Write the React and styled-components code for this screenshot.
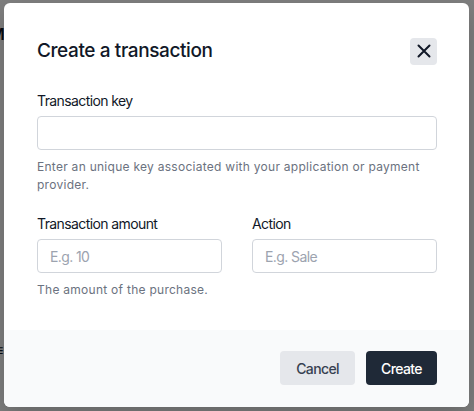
import React from "react";
import styled, { createGlobalStyle } from "styled-components";

const Global = createGlobalStyle`
  html, body { margin: 0; padding: 0; }
  body { font-family: Inter, "Noto Sans", Arial, sans-serif; -webkit-font-smoothing: antialiased; }
  * { box-sizing: border-box; }
`;

const Page = styled.div`
  position: relative;
  width: 474px;
  height: 411px;
  overflow: hidden;
  background: #ffffff;
`;

const BehindText = styled.span`
  position: absolute;
  left: ${(p) => p.$x}px;
  top: ${(p) => p.$y}px;
  font-size: 16px;
  font-weight: 600;
  color: #111827;
`;

const Overlay = styled.div`
  position: absolute;
  inset: 0;
  background: rgba(0, 0, 0, 0.5);
  display: flex;
  align-items: flex-start;
  padding: 3px 0 0 4px;
`;

const Dialog = styled.div`
  width: 465px;
  background: #ffffff;
  border-radius: 6px;
  overflow: hidden;
  box-shadow: 0 10px 25px rgba(0, 0, 0, 0.2);
  display: flex;
  flex-direction: column;
`;

const Body = styled.div`
  padding: 34px 32px 31px 33px;
  display: flex;
  flex-direction: column;
`;

const Header = styled.div`
  display: flex;
  align-items: center;
  justify-content: space-between;
  height: 28px;
  margin-bottom: 26px;
`;

const Title = styled.h2`
  margin: 0;
  font-size: 19px;
  line-height: 28px;
  font-weight: 500;
  letter-spacing: -0.4px;
  color: #111827;
`;

const CloseButton = styled.button`
  width: 27px;
  height: 27px;
  border: none;
  border-radius: 4px;
  background: #e5e7eb;
  display: flex;
  align-items: center;
  justify-content: center;
  padding: 0;
  color: #111827;
`;

const Field = styled.div`
  display: flex;
  flex-direction: column;
`;

const Label = styled.label`
  font-size: 14px;
  line-height: 20px;
  letter-spacing: -0.6px;
  color: #111827;
  margin-bottom: 5px;
`;

const Input = styled.input`
  height: 34px;
  width: 100%;
  border: 1px solid #d1d5db;
  border-radius: 4px;
  padding: 0 12px;
  font-family: inherit;
  font-size: 14px;
  letter-spacing: -0.6px;
  color: #111827;
  background: #ffffff;
  outline: none;
  &::placeholder { color: #9ca3af; }
`;

const Help = styled.p`
  margin: 8px 0 0;
  font-size: 12px;
  line-height: 18px;
  color: #6b7280;
  letter-spacing: 0.27px;
`;

const Row = styled.div`
  display: grid;
  grid-template-columns: 1fr 1fr;
  column-gap: 30px;
  margin-top: ${(p) => p.$top || 0}px;
`;

const Footer = styled.div`
  background: #f9fafb;
  padding: 21px 32px 22px;
  display: flex;
  justify-content: flex-end;
  gap: 11px;
`;

const Button = styled.button`
  height: 34px;
  padding: 0 ${(p) => (p.$primary ? 15 : 16)}px;
  border: none;
  border-radius: 4px;
  font-family: inherit;
  font-size: 14px;
  font-weight: 500;
  letter-spacing: -0.6px;
  background: ${(p) => (p.$primary ? "#1f2937" : "#e5e7eb")};
  color: ${(p) => (p.$primary ? "#ffffff" : "#374151")};
`;

const CloseIcon = () => (
  <svg width="14" height="14" viewBox="0 0 14 14" fill="none">
    <path d="M1.5 1.5L12.5 12.5M12.5 1.5L1.5 12.5" stroke="currentColor" strokeWidth="2" strokeLinecap="round" />
  </svg>
);

export default function App() {
  return (
    <>
      <Global />
      <Page>
        <BehindText $x={-10} $y={24}>M</BehindText>
        <BehindText $x={-6} $y={340}>≡</BehindText>
        <Overlay>
          <Dialog>
            <Body>
              <Header>
                <Title>Create a transaction</Title>
                <CloseButton aria-label="Close">
                  <CloseIcon />
                </CloseButton>
              </Header>
              <Field>
                <Label>Transaction key</Label>
                <Input />
                <Help>Enter an unique key associated with your application or payment provider.</Help>
              </Field>
              <Row $top={20}>
                <Field>
                  <Label>Transaction amount</Label>
                  <Input placeholder="E.g. 10" />
                  <Help>The amount of the purchase.</Help>
                </Field>
                <Field>
                  <Label>Action</Label>
                  <Input placeholder="E.g. Sale" />
                </Field>
              </Row>
            </Body>
            <Footer>
              <Button>Cancel</Button>
              <Button $primary>Create</Button>
            </Footer>
          </Dialog>
        </Overlay>
      </Page>
    </>
  );
}
